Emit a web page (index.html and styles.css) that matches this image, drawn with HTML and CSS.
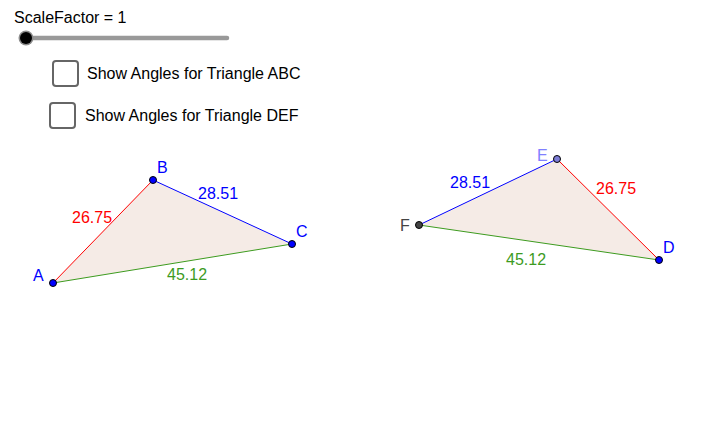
FILE: index.html
```html
<!DOCTYPE html>
<html>
<head>
<meta charset="utf-8">
<link rel="stylesheet" href="styles.css">
</head>
<body>
<div class="app">
  <div class="title">ScaleFactor = 1</div>
  <svg class="slider" width="240" height="18" viewBox="0 0 240 18">
    <line x1="26" y1="9" x2="227" y2="9" class="track"/>
    <circle cx="26" cy="9" r="7.5" class="knob-ring"/>
    <circle cx="26" cy="9" r="6" class="knob"/>
  </svg>
  <div class="checks">
    <label class="check row1"><span class="box"></span><span class="lbl">Show Angles for Triangle ABC</span></label>
    <label class="check row2"><span class="box"></span><span class="lbl">Show Angles for Triangle DEF</span></label>
  </div>
  <svg class="canvas" width="720" height="287" viewBox="0 135 720 287">
    <polygon class="fill" points="53,283 153,180 292,244"/>
    <line class="red" x1="53" y1="283" x2="153" y2="180"/>
    <line class="blue" x1="153" y1="180" x2="292" y2="244"/>
    <line class="green" x1="292" y1="244" x2="53" y2="283"/>

    <polygon class="fill" points="659,260 557,159 419,225"/>
    <line class="red" x1="659" y1="260" x2="557" y2="159"/>
    <line class="blue" x1="557" y1="159" x2="419" y2="225"/>
    <line class="green" x1="419" y1="225" x2="659" y2="260"/>

    <text class="t tb" x="33" y="281">A</text>
    <text class="t tb" x="157" y="173">B</text>
    <text class="t tb" x="296" y="237">C</text>
    <text class="t tr" x="72" y="223">26.75</text>
    <text class="t tb" x="198" y="199">28.51</text>
    <text class="t tg" x="167" y="280">45.12</text>

    <text class="t te" x="537" y="161">E</text>
    <text class="t tf" x="400" y="231">F</text>
    <text class="t tb" x="663" y="253">D</text>
    <text class="t tb" x="450" y="188">28.51</text>
    <text class="t tr" x="596" y="194">26.75</text>
    <text class="t tg" x="506" y="265">45.12</text>

    <circle class="pt pb" cx="53" cy="283" r="3.5"/>
    <circle class="pt pb" cx="153" cy="180" r="3.5"/>
    <circle class="pt pb" cx="292" cy="244" r="3.5"/>
    <circle class="pt pb" cx="659" cy="260" r="3.5"/>
    <circle class="pt pe" cx="557" cy="159" r="3.5"/>
    <circle class="pt pf" cx="419" cy="225" r="3.5"/>
  </svg>
</div>
</body>
</html>
```
FILE: styles.css
```css
html, body {
  margin: 0;
  padding: 0;
  background: #ffffff;
}
.app {
  width: 720px;
  height: 422px;
  padding-top: 9px;
  box-sizing: border-box;
  display: flex;
  flex-direction: column;
  font-family: "Liberation Sans", Arial, sans-serif;
  color: #000;
  overflow: hidden;
}
.title {
  margin-left: 14px;
  font-size: 16px;
  line-height: 18px;
  height: 18px;
}
.slider {
  display: block;
  margin-top: 2px;
}
.track {
  stroke: #999999;
  stroke-width: 4.5;
  stroke-linecap: round;
}
.knob-ring {
  fill: #8c8c8c;
}
.knob {
  fill: #000000;
}
.checks {
  margin-top: 13px;
  display: flex;
  flex-direction: column;
  gap: 15px;
}
.check {
  display: flex;
  align-items: center;
  gap: 8px;
  height: 27px;
  font-size: 16px;
}
.row1 {
  margin-left: 52px;
}
.row2 {
  margin-left: 49px;
  gap: 9px;
}
.box {
  width: 27px;
  height: 27px;
  box-sizing: border-box;
  border: 2px solid #666666;
  border-radius: 4px;
  background: #ffffff;
}
.lbl {
  line-height: 18px;
}
.canvas {
  display: block;
  margin-top: 6px;
}
.fill {
  fill: #f5ebe6;
  stroke: none;
}
.red, .blue, .green {
  stroke-width: 1;
}
.red { stroke: #ff0000; }
.blue { stroke: #0000ff; }
.green { stroke: #3d9b1f; }
.t {
  font-family: "Liberation Sans", Arial, sans-serif;
  font-size: 16px;
}
.tb { fill: #0000ff; }
.tr { fill: #ff0000; }
.tg { fill: #3d9b1f; }
.te { fill: #8080ff; }
.tf { fill: #444444; }
.pt {
  stroke: #000000;
  stroke-width: 1;
}
.pb { fill: #0000ff; }
.pe { fill: #7d7dd6; }
.pf { fill: #444444; }
```
